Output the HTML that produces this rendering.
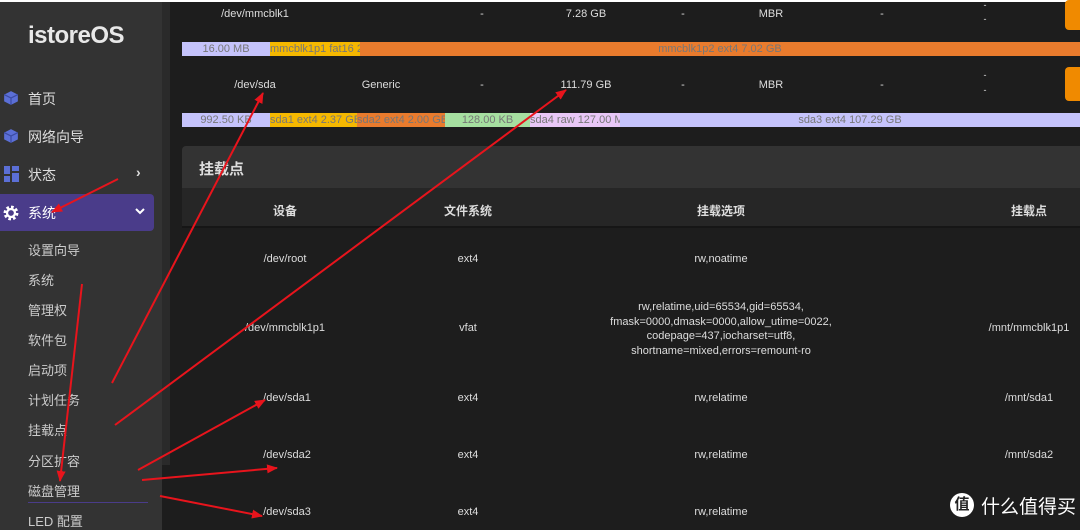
<!DOCTYPE html>
<html><head><meta charset="utf-8"><style>
*{margin:0;padding:0;box-sizing:border-box}
body{width:1080px;height:530px;overflow:hidden;background:#1d1d1d;font-family:"Liberation Sans","Noto Sans CJK SC",sans-serif;position:relative;color:#ddd}
.a{position:absolute;white-space:nowrap}
#side{position:absolute;left:0;top:0;width:162px;height:530px;background:#333}
#strip{position:absolute;left:162px;top:0;width:8px;height:465px;background:#2a2a2a}
.m{position:absolute;left:28px;font-size:14px;color:#ddd}
.s{position:absolute;left:28px;font-size:13px;color:#ccc}
.c{position:absolute;transform:translateX(-50%);white-space:nowrap;font-size:11px;color:#ddd}
.bar{position:absolute;height:14px;font-size:11px;color:#777;text-align:center;line-height:14px;overflow:hidden;white-space:nowrap}
</style></head><body>
<div id="side"></div><div id="strip"></div>
<div class="a" style="left:0;top:0;width:1080px;height:2px;background:#fff"></div>
<div class="a" style="left:28px;top:22px;font-size:24px;font-weight:bold;color:#e8e8e8;letter-spacing:-0.5px">istoreOS</div>
<svg class="a" style="left:3px;top:90px" width="16" height="16" viewBox="0 0 14 14"><path d="M7 1L13 4V10L7 13L1 10V4Z" fill="#5b6fd6"/><path d="M1 4L7 7L13 4M7 7V13" stroke="#3a4aa0" fill="none"/></svg>
<div class="m" style="top:89px">首页</div>
<svg class="a" style="left:3px;top:128px" width="16" height="16" viewBox="0 0 14 14"><path d="M7 1L13 4V10L7 13L1 10V4Z" fill="#5b6fd6"/><path d="M1 4L7 7L13 4M7 7V13" stroke="#3a4aa0" fill="none"/></svg>
<div class="m" style="top:127px">网络向导</div>
<svg class="a" style="left:4px;top:166px" width="15" height="16"><rect x="0" y="0" width="6" height="8" fill="#5b6fd6"/><rect x="8" y="0" width="7" height="5" fill="#5b6fd6"/><rect x="0" y="10" width="6" height="6" fill="#5b6fd6"/><rect x="8" y="7" width="7" height="9" fill="#5b6fd6"/></svg>
<div class="m" style="top:165px">状态</div>
<div class="a" style="left:136px;top:164px;font-size:14px;font-weight:bold;color:#ddd">›</div>
<div class="a" style="left:0;top:194px;width:154px;height:37px;background:#4a3c8a;border-radius:0 4px 4px 0"></div>
<svg class="a" style="left:3px;top:205px" width="16" height="16" viewBox="0 0 14 14"><circle cx="7" cy="7" r="5" fill="none" stroke="#fff" stroke-width="3" stroke-dasharray="2.2 1.7"/><circle cx="7" cy="7" r="3.5" fill="none" stroke="#fff" stroke-width="2"/></svg>
<div class="m" style="top:203px;color:#fff">系统</div>
<svg class="a" style="left:135px;top:208px" width="10" height="8"><path d="M1 1L5 5L9 1" stroke="#fff" stroke-width="2" fill="none"/></svg>
<div class="s" style="top:240px">设置向导</div>
<div class="s" style="top:270px">系统</div>
<div class="s" style="top:300px">管理权</div>
<div class="s" style="top:330px">软件包</div>
<div class="s" style="top:360px">启动项</div>
<div class="s" style="top:390px">计划任务</div>
<div class="s" style="top:420px">挂载点</div>
<div class="s" style="top:451px">分区扩容</div>
<div class="s" style="top:481px">磁盘管理</div>
<div class="a" style="left:28px;top:502px;width:120px;height:1px;background:#4a3c8a"></div>
<div class="s" style="top:511px">LED 配置</div>

<div class="c" style="left:255px;top:8px">/dev/mmcblk1</div>
<div class="c" style="left:482px;top:8px">-</div>
<div class="c" style="left:586px;top:8px">7.28 GB</div>
<div class="c" style="left:683px;top:8px">-</div>
<div class="c" style="left:771px;top:8px">MBR</div>
<div class="c" style="left:882px;top:8px">-</div>
<div class="c" style="left:985px;top:0px;font-size:9px">-</div>
<div class="c" style="left:985px;top:14px;font-size:9px">-</div>
<div class="a" style="left:1065px;top:0;width:20px;height:30px;background:#f08a00;border-radius:4px"></div>
<div class="bar" style="left:182px;top:42px;width:88px;background:#c5c3fb">16.00 MB</div>
<div class="bar" style="left:270px;top:42px;width:90px;background:#f5b800;text-align:left">mmcblk1p1 fat16 2</div>
<div class="bar" style="left:360px;top:42px;width:720px;background:#e97b2d">mmcblk1p2 ext4 7.02 GB</div>

<div class="c" style="left:255px;top:79px">/dev/sda</div>
<div class="c" style="left:381px;top:79px">Generic</div>
<div class="c" style="left:482px;top:79px">-</div>
<div class="c" style="left:586px;top:79px">111.79 GB</div>
<div class="c" style="left:683px;top:79px">-</div>
<div class="c" style="left:771px;top:79px">MBR</div>
<div class="c" style="left:882px;top:79px">-</div>
<div class="c" style="left:985px;top:70px;font-size:9px">-</div>
<div class="c" style="left:985px;top:85px;font-size:9px">-</div>
<div class="a" style="left:1065px;top:67px;width:20px;height:34px;background:#f08a00;border-radius:4px"></div>
<div class="bar" style="left:182px;top:113px;width:88px;background:#c5c3fb">992.50 KB</div>
<div class="bar" style="left:270px;top:113px;width:87px;background:#f5b800;text-align:left">sda1 ext4 2.37 GB</div>
<div class="bar" style="left:357px;top:113px;width:88px;background:#e97b2d;text-align:left">sda2 ext4 2.00 GB</div>
<div class="bar" style="left:445px;top:113px;width:85px;background:#a6dfa0">128.00 KB</div>
<div class="bar" style="left:530px;top:113px;width:90px;background:#e9c7f7;text-align:left">sda4 raw 127.00 M</div>
<div class="bar" style="left:620px;top:113px;width:460px;background:#c5c3fb">sda3 ext4 107.29 GB</div>

<div class="a" style="left:182px;top:146px;width:898px;height:42px;background:#333;border-radius:4px 0 0 0"></div>
<div class="a" style="left:199px;top:158px;font-size:15px;font-weight:bold;color:#ddd">挂载点</div>
<div class="a" style="left:182px;top:188px;width:898px;height:40px;background:#262626;border-bottom:2px solid #161616"></div>
<div class="c" style="left:285px;top:202px;font-size:12px;font-weight:bold">设备</div>
<div class="c" style="left:468px;top:202px;font-size:12px;font-weight:bold">文件系统</div>
<div class="c" style="left:721px;top:202px;font-size:12px;font-weight:bold">挂载选项</div>
<div class="c" style="left:1029px;top:202px;font-size:12px;font-weight:bold">挂载点</div>

<div class="c" style="left:285px;top:253px">/dev/root</div>
<div class="c" style="left:468px;top:253px">ext4</div>
<div class="c" style="left:721px;top:253px">rw,noatime</div>

<div class="c" style="left:285px;top:322px">/dev/mmcblk1p1</div>
<div class="c" style="left:468px;top:322px">vfat</div>
<div class="c" style="left:721px;top:300px;text-align:center;line-height:14.5px">rw,relatime,uid=65534,gid=65534,<br>fmask=0000,dmask=0000,allow_utime=0022,<br>codepage=437,iocharset=utf8,<br>shortname=mixed,errors=remount-ro</div>
<div class="c" style="left:1029px;top:322px">/mnt/mmcblk1p1</div>

<div class="c" style="left:287px;top:392px">/dev/sda1</div>
<div class="c" style="left:468px;top:392px">ext4</div>
<div class="c" style="left:721px;top:392px">rw,relatime</div>
<div class="c" style="left:1029px;top:392px">/mnt/sda1</div>

<div class="c" style="left:287px;top:449px">/dev/sda2</div>
<div class="c" style="left:468px;top:449px">ext4</div>
<div class="c" style="left:721px;top:449px">rw,relatime</div>
<div class="c" style="left:1029px;top:449px">/mnt/sda2</div>

<div class="c" style="left:287px;top:506px">/dev/sda3</div>
<div class="c" style="left:468px;top:506px">ext4</div>
<div class="c" style="left:721px;top:506px">rw,relatime</div>

<div class="a" style="left:950px;top:493px;width:24px;height:24px;border-radius:50%;background:#fff;color:#222;font-size:15px;font-weight:bold;text-align:center;line-height:24px">值</div>
<div class="a" style="left:981px;top:492px;font-size:19px;color:#fff">什么值得买</div>

<svg class="a" style="left:0;top:0" width="1080" height="530">
<defs><marker id="h" markerWidth="11" markerHeight="9" refX="10" refY="4.5" orient="auto" markerUnits="userSpaceOnUse"><path d="M0 0L11 4.5L0 9Z" fill="#e8141c"/></marker></defs>
<g stroke="#e8141c" stroke-width="2" fill="none" marker-end="url(#h)">
<line x1="118" y1="179" x2="52" y2="212"/>
<line x1="112" y1="383" x2="263" y2="93"/>
<line x1="115" y1="425" x2="566" y2="90"/>
<line x1="82" y1="284" x2="60" y2="481"/>
<line x1="138" y1="470" x2="265" y2="400"/>
<line x1="142" y1="480" x2="277" y2="468"/>
<line x1="160" y1="496" x2="262" y2="516"/>
</g></svg>
</body></html>
